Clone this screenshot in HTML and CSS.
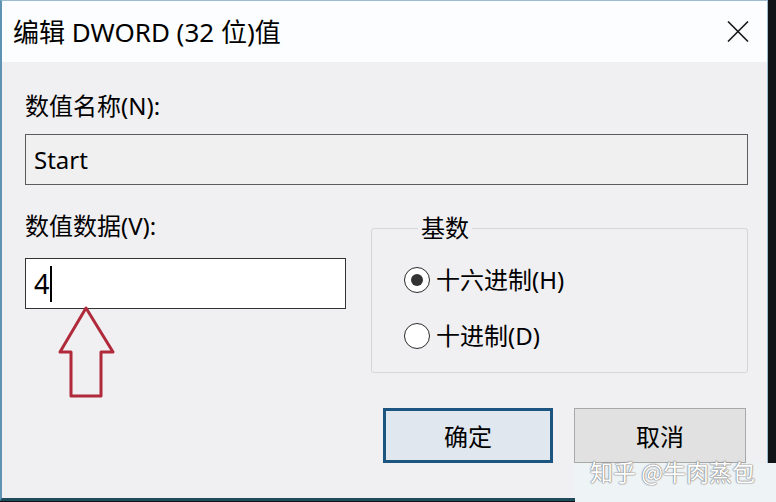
FILE: index.html
```html
<!DOCTYPE html>
<html lang="zh-CN">
<head>
  <meta charset="UTF-8">
  <title>编辑 DWORD (32 位)值</title>
  <link rel="stylesheet" href="styles.css">
</head>
<body>

  <div id="dialog">

    <div id="titlebar">
      <div class="title">编辑 DWORD (32 位)值</div>
      <svg class="close" width="22" height="21" viewBox="0 0 22 21">
        <path d="M1 0.5 L21 20.5 M21 0.5 L1 20.5" stroke="#1a1a1a" stroke-width="1.6" fill="none"/>
      </svg>
    </div>

    <div id="content">
      <div class="label">数值名称(N):</div>
      <div class="field name">Start</div>

      <div class="row">
        <div class="col">
          <div class="label">数值数据(V):</div>
          <div class="field data">4<span class="caret"></span></div>
        </div>

        <fieldset class="group">
          <legend>基数</legend>
          <div class="radio checked"><span class="dot"></span>十六进制(H)</div>
          <div class="radio"><span class="dot"></span>十进制(D)</div>
        </fieldset>
      </div>

      <div class="buttons">
        <div class="btn primary">确定</div>
        <div class="btn">取消</div>
      </div>
    </div>

    <svg class="arrow" width="70" height="100" viewBox="0 0 70 100">
      <path d="M29 2 L56 46 L44 46 L44 90 L14 90 L14 46 L3 46 Z" stroke="#b02a3b" stroke-width="3" stroke-linejoin="round" fill="none"/>
    </svg>

  </div>

  <div id="mark">
    <span>知乎 @牛肉蒸包</span>
  </div>

</body>
</html>
```

FILE: styles.css
```css
*{
  margin: 0;
  padding: 0;
  box-sizing: border-box;
}

body{
  width: 776px;
  height: 502px;
  background-color: #111417;
  overflow: hidden;
  position: relative;
  font-family: "Noto Sans", "Noto Sans CJK SC", sans-serif;
  color: #000000;
}

#dialog{
  width: 768px;
  height: 501px;
  background-color: #f0eff1;
  border: 1px solid #9bbcd0;
  border-left: 2px solid #5e93b3;
  border-bottom: 3px solid #1f4b5c;
  position: relative;
}

#titlebar{
  height: 61px;
  background-color: #fbfdfe;
  display: flex;
  align-items: center;
  justify-content: space-between;
  padding: 0 18px 0 11px;
}

.title{
  font-size: 26px;
  line-height: 32px;
}

#content{
  padding: 28px 19px 0 23px;
}

.label{
  font-size: 24px;
  line-height: 32px;
}

.field{
  height: 51px;
  border: 1px solid #5c5c5c;
  font-size: 24px;
  line-height: 49px;
  padding-left: 8px;
  display: flex;
  align-items: center;
}

.name{
  margin-top: 12px;
  background-color: #f0f0f0;
}

.row{
  display: flex;
  gap: 25px;
  margin-top: 25px;
}

.col{
  width: 321px;
}

.data{
  margin-top: 16px;
  background-color: #ffffff;
  border-color: #333333;
  font-size: 27px;
}

.caret{
  width: 2px;
  height: 36px;
  background-color: #000000;
  margin-left: 1px;
}

.group{
  width: 377px;
  height: 161px;
  margin-top: 2px;
  border: 1px solid #d6d6d8;
  border-radius: 3px;
  padding: 0 0 0 32px;
}

.group legend{
  font-size: 24px;
  line-height: 32px;
  padding: 0 3px;
  margin-left: 14px;
}

.radio{
  display: flex;
  align-items: center;
  gap: 6px;
  font-size: 24px;
  line-height: 32px;
  margin-top: 20px;
}

.radio + .radio{
  margin-top: 24px;
}

.dot{
  width: 26px;
  height: 26px;
  border: 1.6px solid #2a2a2a;
  border-radius: 50%;
  background-color: #ffffff;
  display: flex;
  align-items: center;
  justify-content: center;
}

.checked .dot::after{
  content: "";
  width: 12px;
  height: 12px;
  border-radius: 50%;
  background-color: #333333;
}

.buttons{
  display: flex;
  justify-content: flex-end;
  gap: 21px;
  margin-top: 35px;
  padding-right: 2px;
}

.btn{
  width: 172px;
  height: 55px;
  border: 1px solid #a8a8a8;
  background-color: #e1e1e1;
  font-size: 24px;
  display: flex;
  align-items: center;
  justify-content: center;
}

.primary{
  width: 170px;
  border: 3px solid #1c5580;
  background-color: #e0e7ee;
}

.arrow{
  position: absolute;
  left: 55px;
  top: 305px;
}

#mark{
  position: absolute;
  left: 575px;
  top: 463px;
  width: 201px;
  height: 39px;
  background-color: #eef3f6;
}

#mark span{
  position: absolute;
  left: 15px;
  top: -8px;
  font-family: "Noto Sans CJK SC", sans-serif;
  font-size: 23px;
  line-height: 32px;
  color: #ffffff;
  white-space: nowrap;
  text-shadow: 0 0 1px #777777, 0 0 1px #777777, 0 0 2px #999999;
}
```
